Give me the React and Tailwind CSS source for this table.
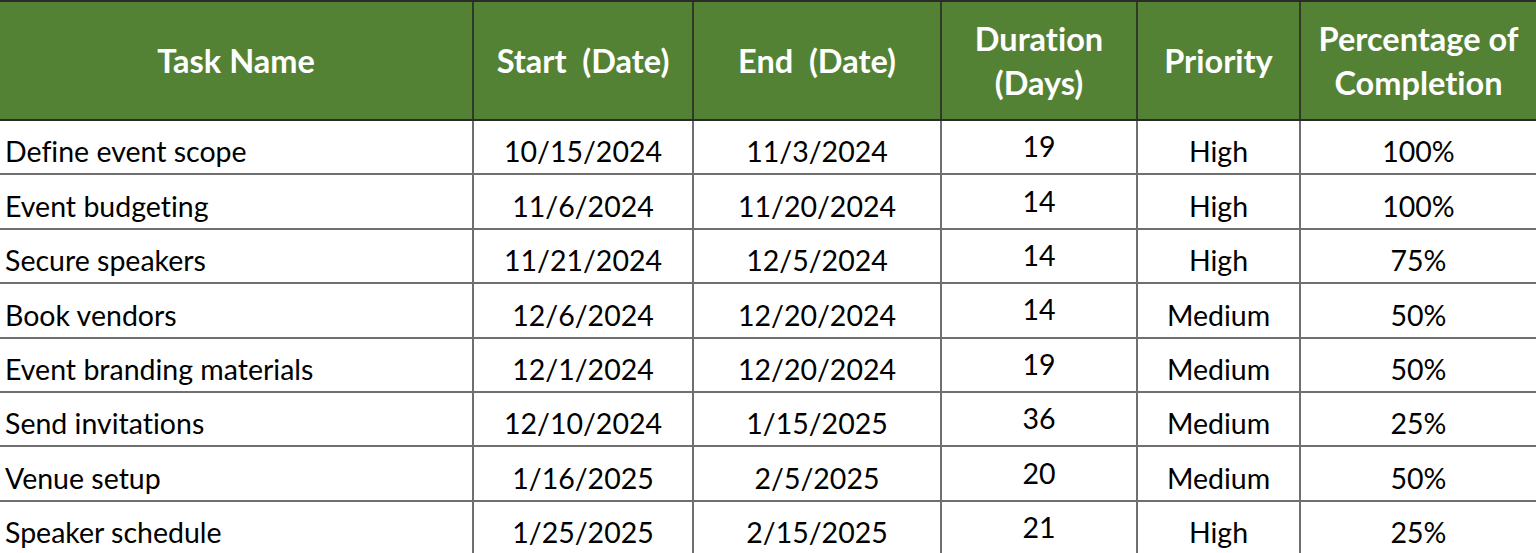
import React from 'react';

const rows = [
    ['Define event scope', '10/15/2024', '11/3/2024', '19', 'High', '100%'],
    ['Event budgeting', '11/6/2024', '11/20/2024', '14', 'High', '100%'],
    ['Secure speakers', '11/21/2024', '12/5/2024', '14', 'High', '75%'],
    ['Book vendors', '12/6/2024', '12/20/2024', '14', 'Medium', '50%'],
    ['Event branding materials', '12/1/2024', '12/20/2024', '19', 'Medium', '50%'],
    ['Send invitations', '12/10/2024', '1/15/2025', '36', 'Medium', '25%'],
    ['Venue setup', '1/16/2025', '2/5/2025', '20', 'Medium', '50%'],
    ['Speaker schedule', '1/25/2025', '2/15/2025', '21', 'High', '25%'],
];

const cols = 'grid grid-cols-[474px_220px_248px_196px_163px_235px]';

const HeadCell = ({ children, last }) => (
    <div className={`flex items-center justify-center text-center leading-[44px] ${last ? '' : 'border-r-2 border-[#2f3a28]'}`}>
        {children}
    </div>
);

const App = () => {
    return (
        <div className="w-[1536px] h-[553px] overflow-hidden bg-white font-['Lato',sans-serif] [font-variant-ligatures:none]">
            {/* Header */}
            <div className={`${cols} h-[121px] bg-[#548235] border-t-2 border-b-2 border-[#2b2b2b] text-white font-bold text-[32.5px]`}>
                <HeadCell>Task Name</HeadCell>
                <HeadCell>Start&nbsp;&nbsp;(Date)</HeadCell>
                <HeadCell>End&nbsp;&nbsp;(Date)</HeadCell>
                <HeadCell>Duration<br />(Days)</HeadCell>
                <HeadCell>Priority</HeadCell>
                <HeadCell last>Percentage of<br />Completion</HeadCell>
            </div>

            {/* Body */}
            {rows.map((r, i) => (
                <div key={i} className={`${cols} h-[54.4px] text-[28.5px] leading-[32px] text-black`}>
                    <div className="flex items-end pl-[5px] pb-[6px] border-r-2 border-b-2 border-[#6f6f6f]">{r[0]}</div>
                    <div className="flex items-end justify-center pb-[6px] border-r-2 border-b-2 border-[#6f6f6f]">{r[1]}</div>
                    <div className="flex items-end justify-center pb-[6px] border-r-2 border-b-2 border-[#6f6f6f]">{r[2]}</div>
                    <div className="flex items-center justify-center pb-[2px] border-r-2 border-b-2 border-[#6f6f6f]">{r[3]}</div>
                    <div className="flex items-end justify-center pb-[6px] border-r-2 border-b-2 border-[#6f6f6f]">{r[4]}</div>
                    <div className="flex items-end justify-center pb-[6px] border-b-2 border-[#6f6f6f]">{r[5]}</div>
                </div>
            ))}
        </div>
    );
};

export default App;
